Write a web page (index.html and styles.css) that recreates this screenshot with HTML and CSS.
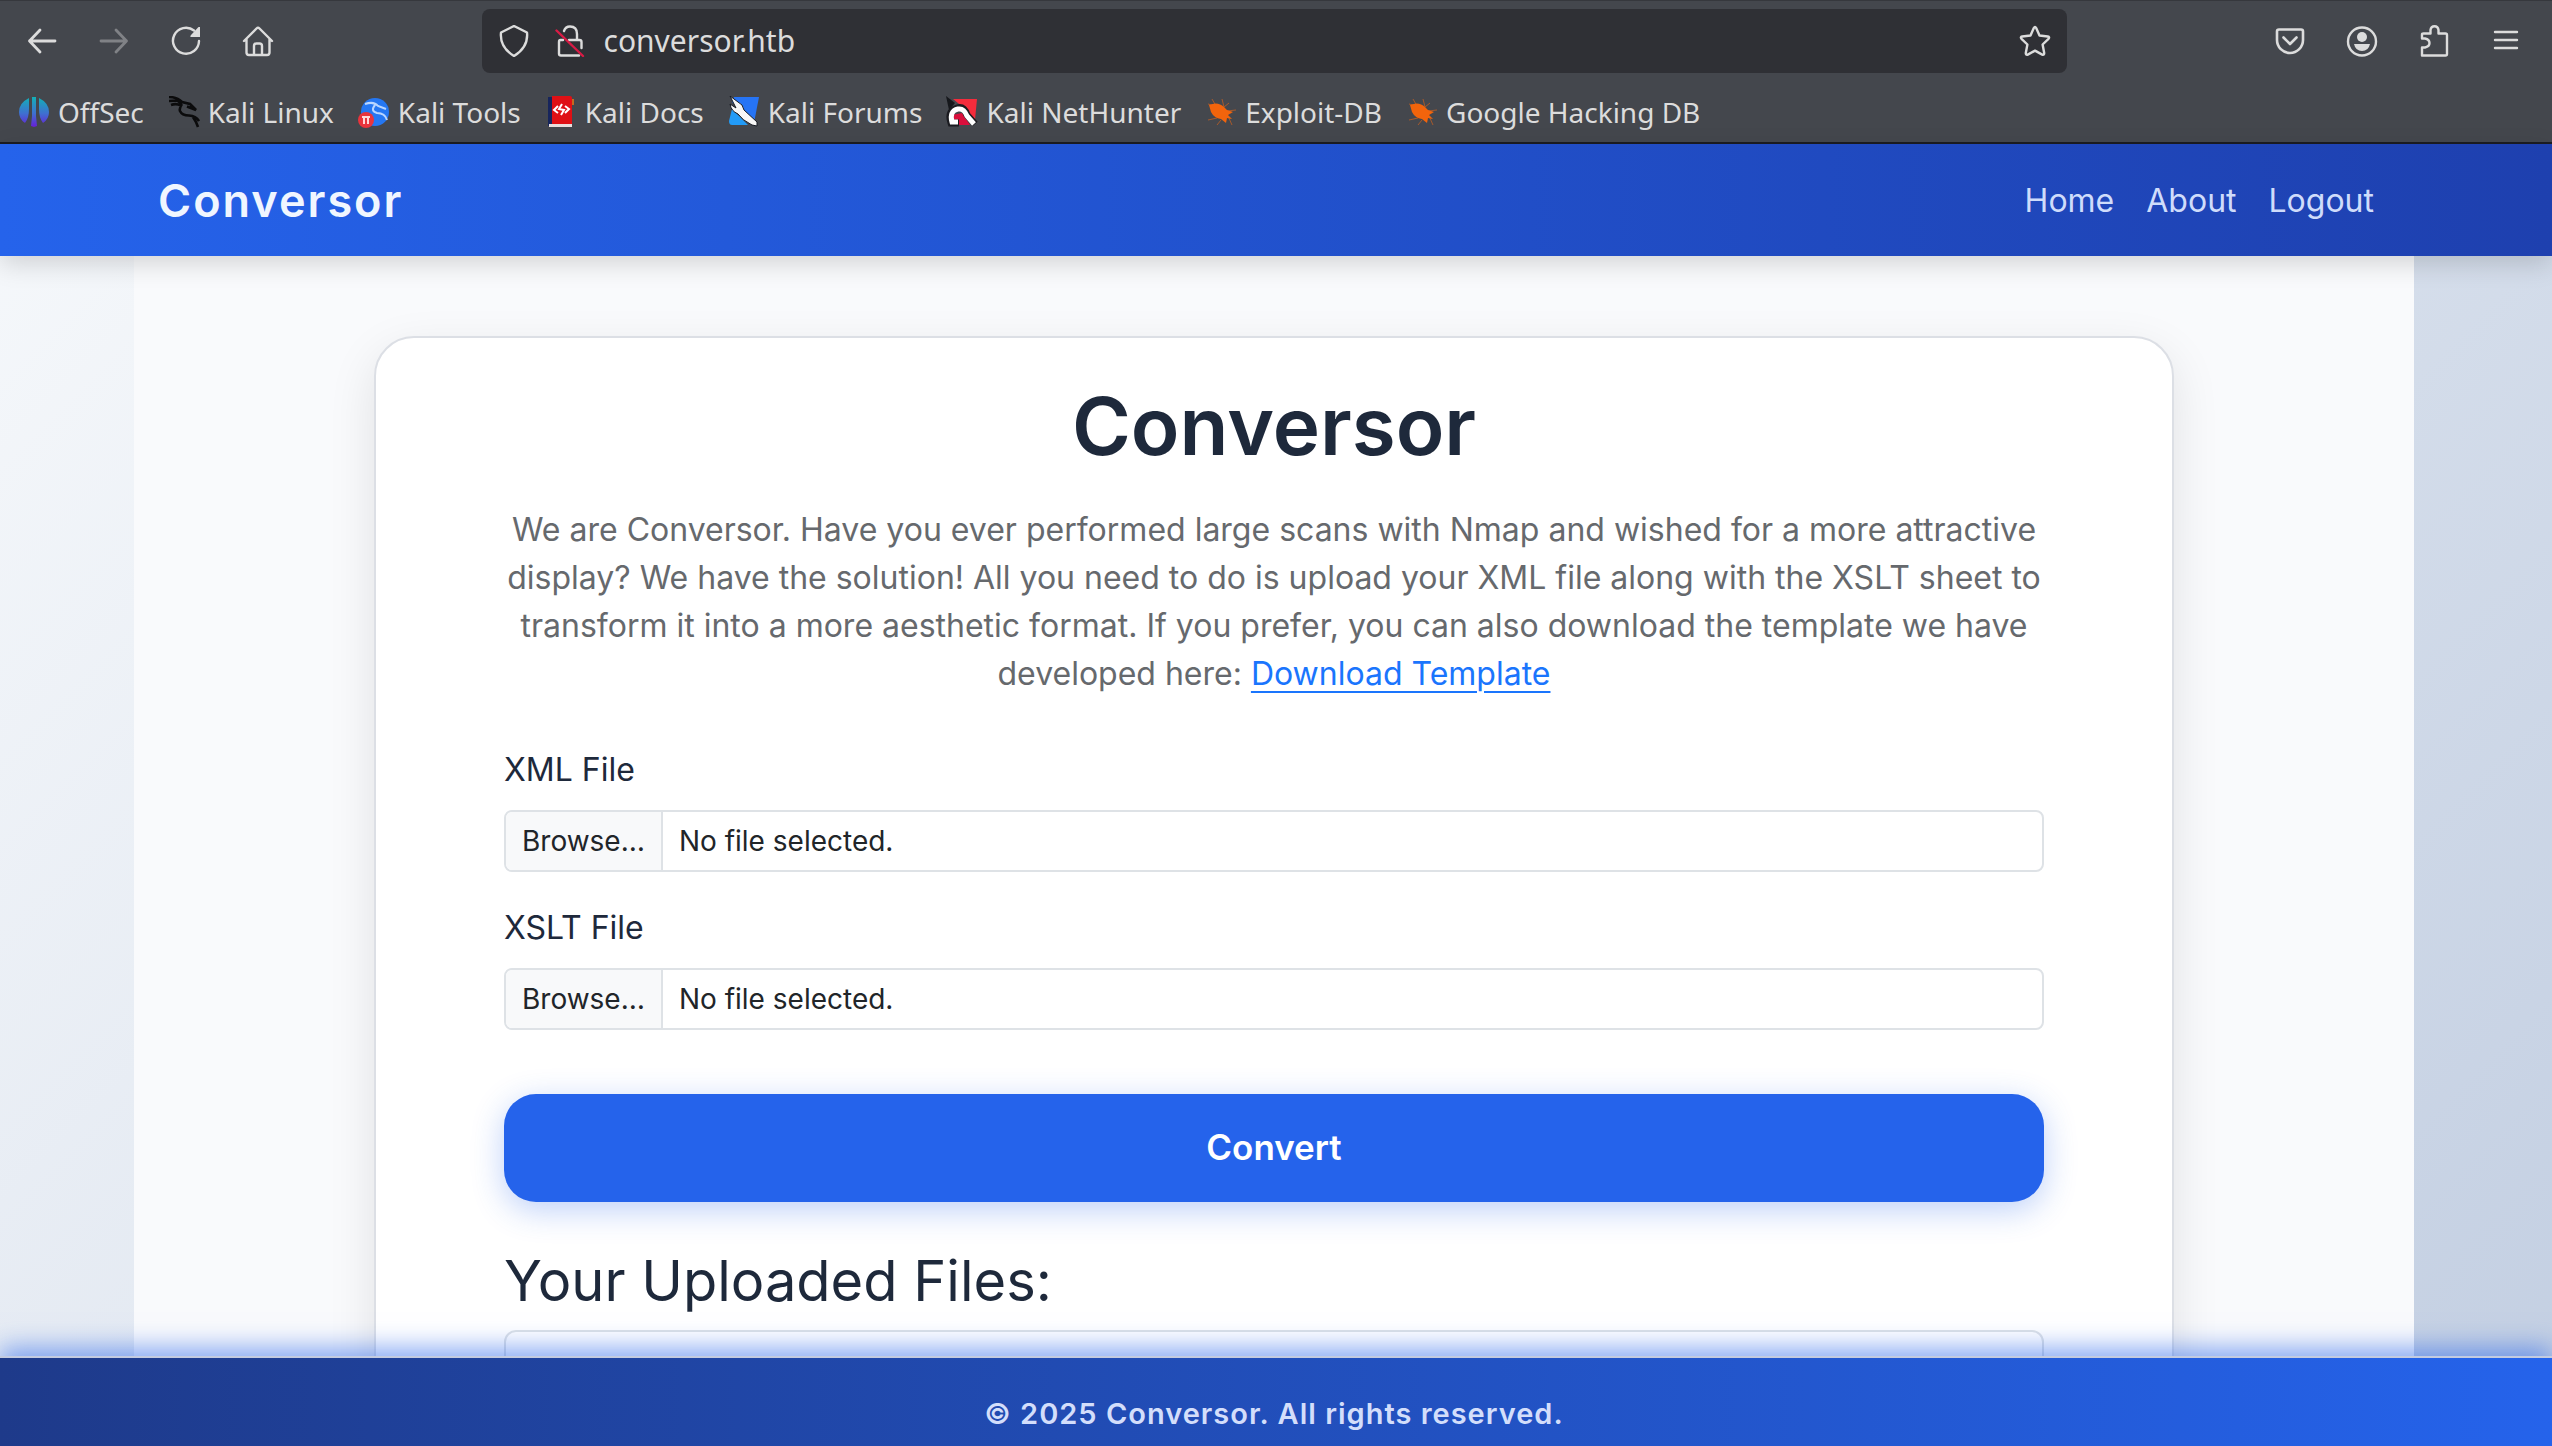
FILE: index.html
```html
<!DOCTYPE html>
<html lang="en">
<head>
  <meta charset="UTF-8" />
  <meta name="viewport" content="width=device-width, initial-scale=1.0"/>
  <title>Conversor</title>
  <link rel="stylesheet" href="styles.css">
</head>
<body>

  <div class="browser">
    <div class="toolbar">
      <div class="tool-group">
        <button class="tool-btn" aria-label="Back">
          <svg viewBox="0 0 32 32"><path d="M29 16H3.500M14 5L3.500 16L14 27" stroke-width="2.800"/></svg>
        </button>
        <button class="tool-btn" aria-label="Forward" disabled>
          <svg viewBox="0 0 32 32"><path d="M3 16H28.500M18 5L28.500 16L18 27" stroke-width="2.800"/></svg>
        </button>
        <button class="tool-btn" aria-label="Reload">
          <svg viewBox="0 0 32 32"><path d="M29 16A13 13 0 1 1 24 5.500"/><path class="solid" d="M30 2V12H20.500Q20 11 21 10L28.500 2Z"/></svg>
        </button>
        <button class="tool-btn" aria-label="Home">
          <svg viewBox="0 0 32 32"><path d="M2 16L14.500 3.500Q16 2 17.500 3.500L30 16M4.500 14V27.500Q4.500 30 7 30H25Q27.500 30 27.500 27.500V14M12 30V21Q12 18.500 14.500 18.500H17.500Q20 18.500 20 21V30"/></svg>
        </button>
      </div>

      <div class="urlbar">
        <div class="site-icons">
          <svg viewBox="0 0 32 32"><path d="M16 1L29 7.500Q30.500 22 16 31Q1.500 22 3 7.500Z"/></svg>
          <svg viewBox="0 0 32 32"><path d="M10 6Q11.500 1.500 16 1.500Q23 1.500 23 9V15M9 15H6.500Q5 15 5 17V28.500Q5 30.500 7 30.500H25M15 15H25.500Q27.500 15 27.500 17V23"/><path class="slash" d="M2.500 5.500L29 31"/></svg>
        </div>
        <input type="text" value="conversor.htb" aria-label="Address">
        <button class="star-btn" aria-label="Bookmark this page">
          <svg viewBox="0 0 32 32"><path d="M14.800 3Q16 1 17.200 3L20.500 10.500L28.800 11.500Q31 12 29.500 13.800L23.600 19.500L25.200 28Q25.300 30.300 23.200 29.600L16 25.600L8.800 29.600Q6.700 30.300 6.800 28L8.400 19.500L2.500 13.800Q1 12 3.200 11.500L11.500 10.500Z"/></svg>
        </button>
      </div>

      <div class="tool-group">
        <button class="tool-btn" aria-label="Save to Pocket">
          <svg viewBox="0 0 32 32"><path d="M5 4.500H27Q29 4.500 29 6.500V15A13 13 0 0 1 3 15V6.500Q3 4.500 5 4.500ZM9.500 12.500L16 19L22.500 12.500" stroke-width="2.600"/></svg>
        </button>
        <button class="tool-btn" aria-label="Account">
          <svg viewBox="0 0 32 32"><circle cx="16" cy="16.500" r="14"/><circle class="solid" cx="16" cy="12" r="5"/><path class="solid" d="M8 19H24Q22.500 26 16 26T8 19Z"/></svg>
        </button>
        <button class="tool-btn" aria-label="Extensions">
          <svg viewBox="0 0 32 32"><path d="M4 30.500V22.500H7Q11.500 21.500 11.500 18T7 13.500H4V9.500Q4 8.500 5.500 8.500H12.500V5Q13 1.200 16.500 1.200T20.500 5V8.500H27.500Q29 8.500 29 10V29Q29 30.500 27.500 30.500Z"/></svg>
        </button>
        <button class="tool-btn" aria-label="Menu">
          <svg viewBox="0 0 32 32"><path d="M5 7H27M5 15H27M5 23H27"/></svg>
        </button>
      </div>
    </div>

    <nav class="bookmarks">
      <a href="#">
        <svg viewBox="0 0 32 32">
          <defs><linearGradient id="offsec" x1="0" y1="0" x2="0" y2="32" gradientUnits="userSpaceOnUse"><stop offset="0" stop-color="#0fb5b5"/><stop offset=".55" stop-color="#3f6fd0"/><stop offset="1" stop-color="#6a18d8"/></linearGradient></defs>
          <path fill="url(#offsec)" d="M11 2Q1 7 1 16Q1 23 7 27Q11 22 11 13ZM21 2Q31 7 31 16Q31 23 25 27Q21 22 21 13ZM14 1H18V20L19 30L16 31L13 30L14 20Z"/>
        </svg>
        OffSec
      </a>
      <a href="#">
        <svg viewBox="0 0 32 32"><path d="M1 1Q9 1 14 6L22 8L28 14L19 10.500M1 5L9 4.500L14 8M3 9Q8 7 13 9.500M14 8Q11 12 12 15Q14 19.500 21 19.500Q28 20 31 25M25 21L28 26L30 31" fill="none" stroke="#0b0b0c" stroke-width="2.600"/></svg>
        Kali Linux
      </a>
      <a href="#">
        <svg viewBox="0 0 32 32"><circle cx="17" cy="16" r="14" fill="#2577f2"/><path d="M7 8Q16 5 20 10L28 13M17 9Q12 15 19 17Q27 17 29 24" fill="none" stroke="#b9d6ff" stroke-width="2"/><circle cx="8" cy="24" r="8" fill="#e9343c"/><path d="M4 21H12M6 21V28M10 21V28" fill="none" stroke="#ffd9d9" stroke-width="2"/></svg>
        Kali Tools
      </a>
      <a href="#">
        <svg viewBox="0 0 32 32"><path fill="#17255c" d="M3 1H8V30H3Z"/><path fill="#df1015" d="M7 0H25Q27 0 27 2V28H7Z"/><path fill="#e8dedd" d="M4 28H27V31H4Z"/><path fill="#c56a20" d="M27 3H29V9H27Z"/><path d="M13 10L9 14L13 17M20 10L24 13L20 17M17 8L14 13L19 14L16 19" fill="none" stroke="#fff" stroke-width="2"/></svg>
        Kali Docs
      </a>
      <a href="#">
        <svg viewBox="0 0 32 32"><path fill="#2674f5" d="M6 1H31L26 27L4 6Z"/><path fill="#229bf7" d="M4 13L20 29H4Q1 29 1 25Z"/><path fill="#f7f7f7" stroke="#161a22" d="M2 0L10 6Q15 8 16 14L29 26V30L24 29Q14 24 10 18Q3 15 2 8L8 12Z"/></svg>
        Kali Forums
      </a>
      <a href="#">
        <svg viewBox="0 0 32 32"><path fill="#f42c3c" d="M7 3H31L29 24L18 12Z"/><path fill="#d90f3c" d="M1 20L6 29H24L16 17Z"/><path fill="#16181c" d="M0 0L9 7L3 14Z"/><path d="M13 27H5Q1 15 11 12Q18 10 21 19L29 28" fill="none" stroke="#1b1b20" stroke-width="7"/><path d="M12 26H6Q3 15 12 13Q18 12 21 20L28 28" fill="none" stroke="#fff" stroke-width="5"/></svg>
        Kali NetHunter
      </a>
      <a href="#">
        <svg viewBox="0 0 32 32"><path d="M7 3L11 10L3 8M17 3L19 11L24 7M22 15L31 14M3 24L12 22M12 29L16 24M23 20L27 29" fill="none" stroke="#a65a2c"/><path fill="#f2640c" d="M4 9Q13 5 19 11L22 14L28 16L23 19L27 23L22 22L21 27L16 23Q9 22 6 16Z"/></svg>
        Exploit-DB
      </a>
      <a href="#">
        <svg viewBox="0 0 32 32"><path d="M7 3L11 10L3 8M17 3L19 11L24 7M22 15L31 14M3 24L12 22M12 29L16 24M23 20L27 29" fill="none" stroke="#a65a2c"/><path fill="#f2640c" d="M4 9Q13 5 19 11L22 14L28 16L23 19L27 23L22 22L21 27L16 23Q9 22 6 16Z"/></svg>
        Google Hacking DB
      </a>
    </nav>
  </div>

  <header class="navbar">
    <div class="container">
      <a class="brand" href="#">Conversor</a>
      <nav class="nav-links">
        <a href="#">Home</a>
        <a href="#">About</a>
        <a href="#">Logout</a>
      </nav>
    </div>
  </header>

  <main class="main">
    <div class="content">
      <section class="card">
        <h1>Conversor</h1>
        <p class="intro">
          We are Conversor. Have you ever performed large scans with Nmap and wished for a more attractive display? We have the solution! All you need to do is upload your XML file along with the XSLT sheet to transform it into a more aesthetic format. If you prefer, you can also download the template we have developed here: <a href="#">Download Template</a>
        </p>

        <form>
          <div class="field">
            <label for="xml_file">XML File</label>
            <div class="file-control">
              <span class="browse">Browse…</span>
              <span class="file-name">No file selected.</span>
              <input type="file" id="xml_file" name="xml_file">
            </div>
          </div>
          <div class="field">
            <label for="xslt_file">XSLT File</label>
            <div class="file-control">
              <span class="browse">Browse…</span>
              <span class="file-name">No file selected.</span>
              <input type="file" id="xslt_file" name="xslt_file">
            </div>
          </div>
          <button type="submit" class="convert-btn">Convert</button>
        </form>

        <h2>Your Uploaded Files:</h2>
        <ul class="file-list">
          <li></li>
        </ul>
      </section>
    </div>
  </main>

  <footer class="footer">© 2025 Conversor. All rights reserved.</footer>

</body>
</html>
```
FILE: styles.css
```css
* {
  box-sizing: border-box;
}

body {
  margin: 0;
  height: 100vh;
  display: flex;
  flex-direction: column;
  overflow: hidden;
  font-family: Inter, "Liberation Sans", sans-serif;
  font-size: 32px;
  line-height: 48px;
  color: #1e293b;
  background: linear-gradient(135deg, #f8fafc, #c3cfe2);
}

button,
input {
  font: inherit;
  color: inherit;
}

/* browser bars */
.browser {
  flex-shrink: 0;
  background: #44474d;
  border-top: 1px solid #36383d;
  border-bottom: 2px solid #1b1c22;
  color: #dcdcdc;
  font-family: "Noto Sans", sans-serif;
  font-size: 30px;
}

.toolbar {
  display: flex;
  align-items: center;
  justify-content: space-between;
  height: 79px;
  padding: 0 10px 0 6px;
}

.tool-group,
.site-icons {
  display: flex;
}

.site-icons {
  gap: 24px;
}

.tool-btn,
.star-btn {
  display: flex;
  align-items: center;
  justify-content: center;
  padding: 0;
  border: 0;
  background: none;
  color: #dcdcdc;
}

.tool-btn {
  width: 72px;
  height: 64px;
}

.tool-btn:disabled {
  color: #808286;
}

.toolbar svg {
  width: 32px;
  height: 32px;
  fill: none;
  stroke: currentColor;
  stroke-width: 2.4;
  stroke-linecap: round;
  stroke-linejoin: round;
}

.toolbar svg .solid {
  fill: currentColor;
  stroke: none;
}

.toolbar svg .slash {
  stroke: #d81b45;
}

.urlbar {
  display: flex;
  align-items: center;
  gap: 18px;
  width: 62.5%;
  height: 64px;
  padding: 0 16px;
  border-radius: 8px;
  background: #2f3035;
}

.urlbar input {
  flex: 1;
  min-width: 0;
  padding: 0;
  border: 0;
  outline: 0;
  background: none;
}

.bookmarks {
  display: flex;
  gap: 24px;
  height: 62px;
  padding: 8px 18px;
  font-size: 28px;
}

.bookmarks a {
  display: flex;
  align-items: center;
  gap: 8px;
  height: 48px;
  color: inherit;
  text-decoration: none;
  white-space: nowrap;
}

.bookmarks svg {
  width: 32px;
  height: 32px;
}

/* site header */
.navbar {
  position: relative;
  z-index: 2;
  flex-shrink: 0;
  padding-right: 4px;
  background: linear-gradient(90deg, #2563eb, #1e40af);
  box-shadow: 0 8px 24px rgba(0, 0, 0, 0.15);
}

.container {
  display: flex;
  align-items: center;
  justify-content: space-between;
  max-width: 2280px;
  height: 112px;
  margin: 0 auto;
  padding: 2px 24px 0;
}

.brand {
  font-size: 45px;
  font-weight: 600;
  letter-spacing: 2px;
  color: #f0f6ff;
  text-decoration: none;
}

.nav-links {
  display: flex;
  gap: 32px;
  padding-right: 16px;
}

.nav-links a {
  color: #cfdcfb;
  text-decoration: none;
}

/* content */
.main {
  flex: 1;
  min-height: 0;
  padding-right: 4px;
  overflow: hidden;
}

.content {
  max-width: 2280px;
  margin: 0 auto;
  padding: 80px 24px;
  background: #f9fafc;
}

.card {
  max-width: 1800px;
  margin: 0 auto;
  padding: 40px 128px;
  border: 2px solid #dcdfe5;
  border-radius: 40px;
  background: #fff;
  box-shadow: 0 16px 48px rgba(0, 0, 0, 0.1);
}

h1 {
  margin: 0 0 32px;
  font-size: 80px;
  line-height: 96px;
  font-weight: 600;
  text-align: center;
}

.intro {
  margin: 0 0 48px;
  text-align: center;
  color: #66696d;
}

.intro a {
  color: #1a75fd;
  text-decoration-thickness: 2px;
  text-underline-offset: 6px;
}

.field {
  margin-bottom: 32px;
}

.field label {
  display: block;
  margin-bottom: 16px;
}

.file-control {
  position: relative;
  display: flex;
  overflow: hidden;
  border: 2px solid #dee2e6;
  border-radius: 8px;
  background: #fff;
  color: #212529;
  font-size: 28px;
  line-height: 42px;
}

.browse {
  padding: 8px 16px;
  border-right: 2px solid #dee2e6;
  background: #f8f9fa;
}

.file-name {
  padding: 8px 16px;
}

.file-control input {
  position: absolute;
  inset: 0;
  width: 100%;
  opacity: 0;
}

.convert-btn {
  display: block;
  width: 100%;
  height: 108px;
  margin-top: 64px;
  padding: 0 0 2px;
  border: 0;
  border-radius: 32px;
  background: #2563eb;
  box-shadow: 0 8px 32px rgba(37, 99, 235, 0.3);
  color: #fff;
  font-size: 35px;
  font-weight: 600;
}

h2 {
  margin: 46px 0 16px;
  font-size: 56px;
  line-height: 66px;
  font-weight: 400;
}

.file-list {
  margin: 0;
  padding: 0;
  list-style: none;
  border: 2px solid #dee2e6;
  border-radius: 12px;
}

.file-list li {
  height: 96px;
}

.footer {
  position: relative;
  z-index: 2;
  flex-shrink: 0;
  height: 90px;
  padding: 32px 4px 0 0;
  border-top: 2px solid #c3cbe0;
  background: linear-gradient(90deg, #1e3a8a, #2563eb);
  box-shadow: 0 -8px 24px rgba(37, 99, 235, 0.55);
  color: #d3defb;
  font-size: 29px;
  font-weight: 600;
  letter-spacing: 1px;
  text-align: center;
}
```
